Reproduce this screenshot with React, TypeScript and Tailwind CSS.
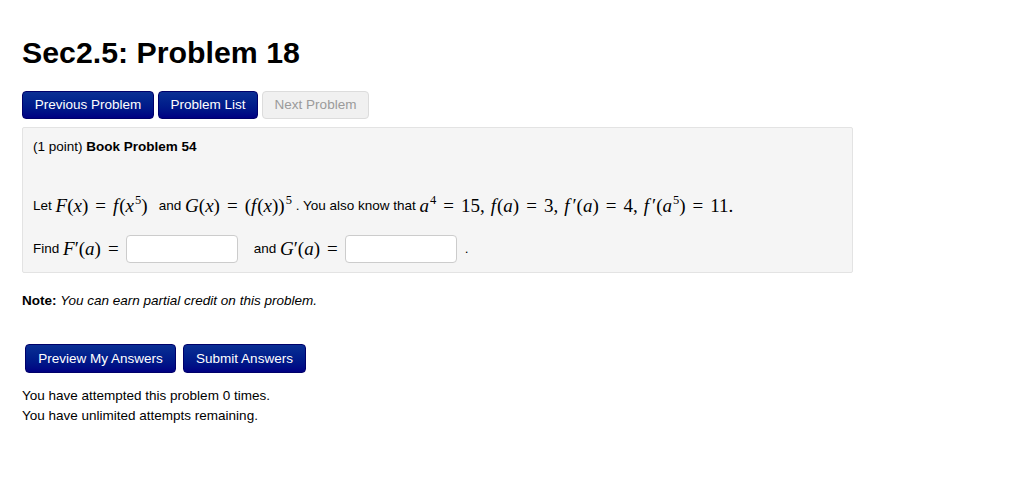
import React from 'react';

const M: React.FC<{ children: React.ReactNode }> = ({ children }) => (
  <span className="font-['Liberation_Serif',serif] text-[19px] italic">{children}</span>
);

const R: React.FC<{ children: React.ReactNode }> = ({ children }) => <span className="not-italic">{children}</span>;

const Eq = () => <span className="not-italic mx-[7px]">=</span>;

const Sup: React.FC<{ children: React.ReactNode }> = ({ children }) => (
  <sup className="not-italic text-[12.5px] ml-[1px] -top-[8px]">{children}</sup>
);

// italic f with a bit of room so the bracket or prime doesn't collide
const F: React.FC<{ lead?: boolean; prime?: boolean }> = ({ lead, prime }) => (
  <span className={`${lead ? 'ml-[6px] ' : ''}${prime ? 'mr-[3px]' : 'mr-[1px]'}`}>f</span>
);

const navBtn =
  'h-[28px] rounded-[4px] border border-[#00006a] bg-gradient-to-b from-[#0b2f94] to-[#000082] text-white text-[13.5px] leading-none';

const App: React.FC = () => {
  return (
    <div className="min-h-screen bg-white pl-[22px] pt-[36px] font-['Liberation_Sans',Arial,sans-serif] text-[13.5px] text-black">
      <h1 className="text-[30.3px] font-bold leading-[33px]">Sec2.5: Problem 18</h1>

      <div className="mt-[22px] flex gap-[4px]">
        <button type="button" className={`${navBtn} w-[132px]`}>Previous Problem</button>
        <button type="button" className={`${navBtn} w-[100px]`}>Problem List</button>
        <button
          type="button"
          className="h-[28px] w-[107px] rounded-[4px] border border-[#dcdcdc] bg-[#f0f0f0] text-[13.5px] leading-none text-[#9a9a9a]"
        >
          Next Problem
        </button>
      </div>

      <div className="mt-[8px] w-[831px] rounded-[2px] border border-[#e3e3e3] bg-[#f5f5f5] px-[10px] pt-[10px] pb-[9px]">
        <div className="leading-[18px]">
          (1 point) <b>Book Problem 54</b>
        </div>

        <div className="mt-[40px] flex h-[20px] items-center whitespace-nowrap">
          <span>Let&nbsp;</span>
          <M>
            F<R>(</R>x<R>)</R>
            <Eq />
            <F />
            <R>(</R>x<Sup>5</Sup>
            <R>)</R>
          </M>
          <span>&nbsp;&nbsp;&nbsp;and&nbsp;</span>
          <M>
            G<R>(</R>x<R>)</R>
            <Eq />
            <R>(</R>
            <F />
            <R>(</R>x<R>))</R>
            <Sup>5</Sup>
          </M>
          <span>&nbsp;. You also know that&nbsp;</span>
          <M>
            a<Sup>4</Sup>
            <Eq />
            <R>15,</R>
            <F lead />
            <R>(</R>a<R>)</R>
            <Eq />
            <R>3,</R>
            <F lead prime />
            <R>′(</R>a<R>)</R>
            <Eq />
            <R>4,</R>
            <F lead prime />
            <R>′(</R>a<Sup>5</Sup>
            <R>)</R>
            <Eq />
            <R>11.</R>
          </M>
        </div>

        <div className="mt-[19px] flex h-[28px] items-center whitespace-nowrap">
          <span>Find&nbsp;</span>
          <M>
            F<R>′(</R>a<R>)</R>
            <Eq />
          </M>
          <input
            type="text"
            className="h-[28px] w-[112px] rounded-[4px] border border-[#cccccc] bg-white"
          />
          <span className="ml-[16px]">and&nbsp;</span>
          <M>
            G<R>′(</R>a<R>)</R>
            <Eq />
          </M>
          <input
            type="text"
            className="h-[28px] w-[112px] rounded-[4px] border border-[#cccccc] bg-white"
          />
          <span className="ml-[8px]">.</span>
        </div>
      </div>

      <div className="mt-[19px] leading-[18px]">
        <b>Note:</b> <i>You can earn partial credit on this problem.</i>
      </div>

      <div className="mt-[34px] ml-[3px] flex gap-[7px]">
        <button type="button" className={`${navBtn} h-[29px] w-[151px]`}>Preview My Answers</button>
        <button type="button" className={`${navBtn} h-[29px] w-[123px]`}>Submit Answers</button>
      </div>

      <div className="mt-[13px] leading-[19.5px]">
        <div>You have attempted this problem 0 times.</div>
        <div>You have unlimited attempts remaining.</div>
      </div>
    </div>
  );
};

export default App;
